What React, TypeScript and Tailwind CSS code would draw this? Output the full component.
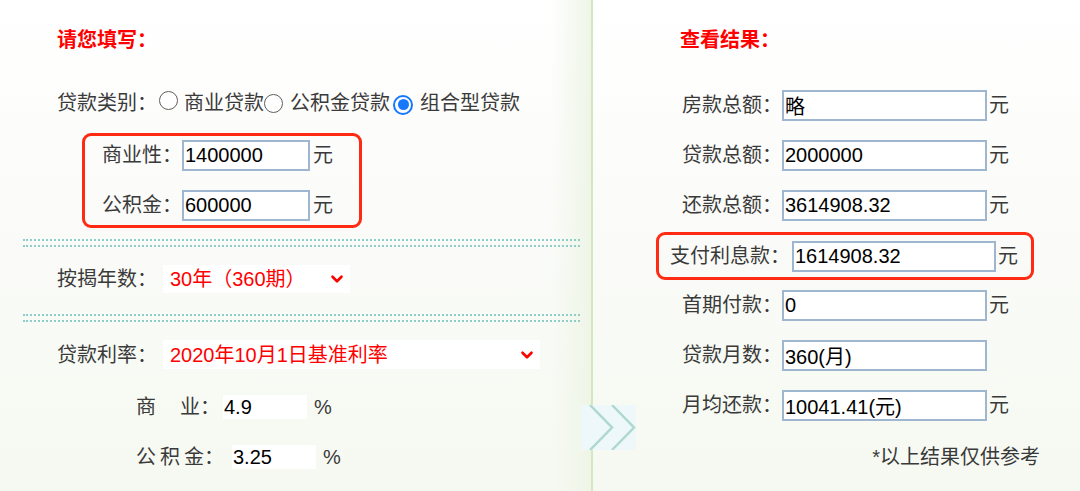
import { ChevronDown } from 'lucide-react';

const font = "font-['Liberation_Sans','Noto_Sans_CJK_SC',sans-serif]";

function Radio({ checked }: { checked?: boolean }) {
  if (checked) {
    return (
      <span className="inline-flex h-[20px] w-[20px] shrink-0 items-center justify-center rounded-full border-2 border-[#1677ff] bg-white">
        <span className="h-[11px] w-[11px] rounded-full bg-[#1677ff]" />
      </span>
    );
  }
  return <span className="inline-block h-[19px] w-[19px] shrink-0 rounded-full border border-[#5f5f5f] bg-white" />;
}

function Field({ value, w = 'w-[205px]' }: { value: string; w?: string }) {
  return (
    <input
      readOnly
      value={value}
      className={`${w} h-[31px] border-2 border-[#9fb6d1] bg-white px-[1px] text-[20px] leading-none text-black outline-none`}
    />
  );
}

function Dots() {
  return (
    <div className="ml-[23px] w-[557px]">
      <div className="border-t-2 border-dotted border-[#8fcdc8]" />
      <div className="mt-[4px] border-t-2 border-dotted border-[#8fcdc8]" />
    </div>
  );
}

// 右侧结果行
function ResultRow({ label, value, unit = true }: { label: string; value: string; unit?: boolean }) {
  return (
    <div className="flex h-[50px] items-center">
      <div className="w-[189px] whitespace-nowrap text-right text-[#3a3a3a]">{label}</div>
      <Field value={value} />
      {unit && <span className="ml-[2px] text-[#3a3a3a]">元</span>}
    </div>
  );
}

export default function App() {
  return (
    <div className={`${font} relative flex h-[491px] w-[1080px] overflow-hidden bg-gradient-to-b from-white via-[#fafbf8] to-[#f6f9f1] text-[20px]`}>
      {/* 左侧：填写 */}
      <div className="relative w-[591px] shrink-0">
        <div className="absolute right-0 top-0 h-full w-[40px] bg-gradient-to-r from-transparent to-[#eef5e7]" />
        <div className="relative flex flex-col whitespace-nowrap">
          <div className="flex h-[80px] items-center pl-[57px] font-bold text-[#ff0000]">请您填写：</div>

          <div className="mt-[11px] flex h-[24px] items-center pl-[57px] text-[#3a3a3a]">
            <span>贷款类别：</span>
            <span className="ml-[2px]"><Radio /></span>
            <span className="ml-[6px]">商业贷款</span>
            <Radio />
            <span className="ml-[7px]">公积金贷款</span>
            <span className="ml-[3px]"><Radio checked /></span>
            <span className="ml-[7px]">组合型贷款</span>
          </div>

          <div className="ml-[82px] mt-[18px] h-[95px] w-[280px] rounded-[9px] border-[3px] border-[#ff2a12] pl-[17px] pt-[4px]">
            <div className="flex h-[30px] items-center text-[#3a3a3a]">
              <span className="w-[80px]">商业性：</span>
              <Field value="1400000" w="w-[128px]" />
              <span className="ml-[3px]">元</span>
            </div>
            <div className="mt-[20px] flex h-[30px] items-center text-[#3a3a3a]">
              <span className="w-[80px]">公积金：</span>
              <Field value="600000" w="w-[128px]" />
              <span className="ml-[3px]">元</span>
            </div>
          </div>

          <div className="mt-[11px]"><Dots /></div>

          <div className="mt-[18px] flex h-[28px] items-center pl-[57px]">
            <span className="w-[106px] text-[#3a3a3a]">按揭年数：</span>
            <div className="flex h-[28px] w-[187px] items-center justify-between bg-white pl-[7px] pr-[4px] text-[#ff0000]">
              <span>30年（360期）</span>
              <ChevronDown size={18} strokeWidth={3.5} color="#ff0000" />
            </div>
          </div>

          <div className="mt-[21px]"><Dots /></div>

          <div className="mt-[18px] flex h-[29px] items-center pl-[57px]">
            <span className="w-[106px] text-[#3a3a3a]">贷款利率：</span>
            <div className="flex h-[29px] w-[377px] items-center justify-between bg-white pl-[7px] pr-[4px] text-[#ff0000]">
              <span>2020年10月1日基准利率</span>
              <ChevronDown size={18} strokeWidth={3.5} color="#ff0000" />
            </div>
          </div>

          <div className="mt-[26px] flex h-[24px] items-center pl-[136px] text-[#3a3a3a]">
            <span>商</span>
            <span className="ml-[24px]">业：</span>
            <div className="ml-[3px] flex h-[24px] w-[84px] items-center bg-white pl-[1px] text-black">4.9</div>
            <span className="ml-[7px]">%</span>
          </div>

          <div className="mt-[26px] flex h-[24px] items-center pl-[136px] text-[#3a3a3a]">
            <span>公</span>
            <span className="ml-[4px]">积</span>
            <span className="ml-[4px]">金：</span>
            <div className="ml-[8px] flex h-[24px] w-[84px] items-center bg-white pl-[1px] text-black">3.25</div>
            <span className="ml-[7px]">%</span>
          </div>
        </div>
      </div>

      <div className="w-[2px] shrink-0 bg-[#d3e8c0]" />

      {/* 右侧：结果 */}
      <div className="flex flex-1 flex-col">
        <div className="flex h-[80px] items-center pl-[87px] font-bold text-[#ff0000]">查看结果：</div>
        <ResultRow label="房款总额：" value="略" />
        <ResultRow label="贷款总额：" value="2000000" />
        <ResultRow label="还款总额：" value="3614908.32" />
        <div className="h-[50px] pt-[2px]">
          <div className="ml-[63px] flex h-[48px] w-[378px] items-center rounded-[9px] border-[3px] border-[#ff2a12] pl-[11px] text-[#3a3a3a]">
            <span className="w-[122px] whitespace-nowrap">支付利息款：</span>
            <Field value="1614908.32" w="w-[204px]" />
            <span className="ml-[2px]">元</span>
          </div>
        </div>
        <ResultRow label="首期付款：" value="0" />
        <ResultRow label="贷款月数：" value="360(月)" unit={false} />
        <ResultRow label="月均还款：" value="10041.41(元)" />
        <div className="flex h-[54px] items-center justify-end whitespace-nowrap pr-[40px] text-[#3a3a3a]">*以上结果仅供参考</div>
      </div>

      {/* 中间箭头 */}
      <div className="absolute left-[581px] top-[405px] h-[45px] w-[55px] bg-[#eef7fa]">
        <svg width="55" height="45" viewBox="0 0 55 45" fill="none">
          <path d="M9 0 L31 22.5 L9 45" stroke="#aed9cf" strokeWidth="2.5" />
          <path d="M31 0 L53 22.5 L31 45" stroke="#aed9cf" strokeWidth="2.5" />
        </svg>
      </div>
    </div>
  );
}
